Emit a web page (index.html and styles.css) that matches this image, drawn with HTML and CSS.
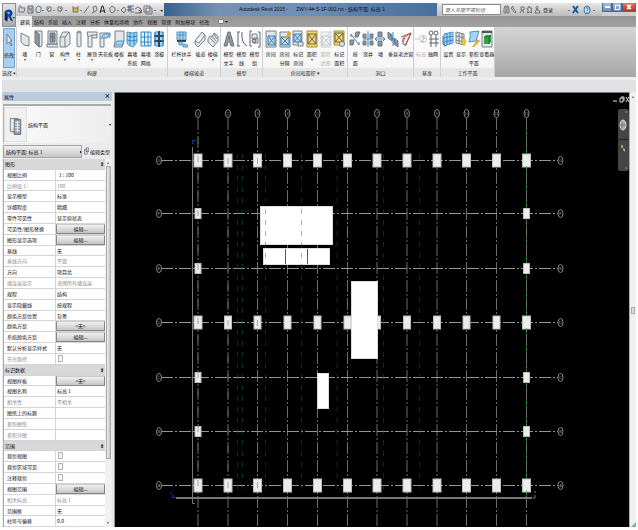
FILE: index.html
```html
<!DOCTYPE html>
<html lang="zh-CN">
<head>
<meta charset="utf-8">
<title>Autodesk Revit 2015 - ZWY-4#-S-1F-002.rvt</title>
<link rel="stylesheet" href="styles.css">
</head>
<body>
<div class="app">
  <header class="top">
    <button class="app-button" aria-label="R"><svg viewBox="0 0 14 23"><path d="M2 7Q8 3 11 8Q12 11 9 13L12 19L9 18L6 13L5 19L2 17L4 9Z" fill="#0b3f9c"/><path d="M5 8Q8 7 8 9Q8 11 6 11Z" fill="#7ab0ee"/><path d="M2 7L4 9L5 19L2 17Z" fill="#062560"/><path d="M11 14h3l-1.500 2z" fill="#333"/></svg></button>
    <div class="top-rows">
      <div class="titlebar">
        <div class="quick">
          <svg viewBox="0 0 148 13" class="line">
            <path d="M3 4v5h5l1-4H5V3H3M12 3h5v7h-5zM13 3v3h3V3M13 7h3v3M20 5l2-2 3 1v4l-2 2-3-1zM31 7V4h4v4h-3M31 7l2-2M31 7l2 2M46 7V4h-4v4h3M46 7l-2-2M46 7l-2 2M68 10l5-7M77 4l3-1 1 4-3 2zM78 9l-2 1"/>
            <path d="M57 5h5v4h-5z" fill="#e8b13c"/><path d="M57 3v2M62 3v2M119 6l3-2 3 2v4h-6M105 7l3-3 2 3-2 3z"/>
            <path d="M84 10l2-7h1l2 7M85 8h3" class="strong"/>
            <path d="M94 5l2-2 3 2v3l-3 2-2-2zM115 3h3M115 6h3M115 9h3M128 3h6v6h-6zM130 5h6v6h-6z"/>
            <path d="M112 3h3v2h-3zM112 6h3v2h-3z" fill="#3f8fd0"/><path d="M123 7l3 3M126 7l-3 3" stroke="#d02020"/>
            <path d="M26 7h2l-1 1zM37 7h2l-1 1zM49 7h2l-1 1zM64 7h2l-1 1zM101 7h2l-1 1zM138 7h2l-1 1zM144 7h3l-1 2z" class="arrow"/>
          </svg>
        </div>
        <h1 class="title"><span>Autodesk Revit 2015 -</span><span>ZWY-4#-S-1F-002.rvt - 结构平面: 标高 1</span></h1>
        <div class="help">
          <input class="search" type="text" placeholder="键入关键字或短语" aria-label="搜索">
          <svg viewBox="0 0 42 13" class="line help-icons"><path d="M3 10V6l1-3h1v7zM6 10V3h1l1 3v4zM12 3l-2 2 4 5 1-1-3-4zM20 4h3v3h-3zM19 10l2-3 2 3M28 3l1 2h2l-1 2 .5 3-2-1-2 1 .5-3-1-2h2zM36 7q-2-3 0-4 2 1 0 4M34 10l1-3h3l1 3z"/></svg>
          <button class="login">登录</button>
          <svg viewBox="0 0 42 13" class="line help-icons push"><path d="M8 7h2l-1 1zM33 7h2l-1 1z" class="arrow"/><path d="M13 3l5 7M18 3l-5 7" stroke="#145aa0" stroke-width="2"/><ellipse cx="27" cy="7" rx="3" ry="4" fill="#c9e2f5" stroke="#2872b0"/><path d="M26 5q2-1 2 1l-1 2M27 9v1"/></svg>
        </div>
        <div class="win"><button aria-label="最小化"><i class="min"></i></button><button aria-label="还原"><i class="res"></i></button><button aria-label="关闭" class="close"><svg viewBox="0 0 10 9"><path d="M3 2l4 5M7 2L3 7" stroke="#fff" stroke-width="2"/></svg></button></div>
      </div>
      <nav class="tabs"><a href="#" class="on">建筑</a><a href="#">结构</a><a href="#">系统</a><a href="#">插入</a><a href="#">注释</a><a href="#">分析</a><a href="#">体量和场地</a><a href="#">协作</a><a href="#">视图</a><a href="#">管理</a><a href="#">附加模块</a><a href="#">修改</a><svg viewBox="0 0 10 7"><rect x=".5" y="1.500" width="5" height="4" rx="1" fill="#eee" stroke="#777"/><path d="M7 3h3L8.500 5z" fill="#222"/></svg></nav>
    </div>
  </header>

  <div class="ribbon">
    <section class="panel p-select"><div class="tools">
      <button class="picked"><svg viewBox="0 0 12 18"><path d="M4 3v10l2-2 2 4 1-1-2-4h2z" class="g"/></svg>修改</button>
    </div><h2>选择 ▾</h2></section>
    <section class="panel p-build"><div class="tools">
      <button class="more"><svg viewBox="0 0 12 18"><path d="M2 3l8 4v9q-6 0-8-4z" class="g"/></svg>墙</button>
      <button><svg viewBox="0 0 12 18"><path d="M3 1h7v15l-3 1V4z" class="g"/><path d="M3 1l4 3v13l-4-4z" class="d"/></svg>门</button>
      <button><svg viewBox="0 0 12 18"><path d="M2 1h9v13H2zM1 14h11v3H1z" class="g"/><path d="M4 3h5v9H4zM6.500 3v9M4 7h5" class="d"/></svg>窗</button>
      <button class="more"><svg viewBox="0 0 12 18"><path d="M1 7l3-5h6l1 3v9l-4 3H1zM1 7h5v10M6 7l4-5" class="g"/></svg>构件</button>
      <button class="more"><svg viewBox="0 0 12 18"><path d="M4 2q2-2 4 0v14q-2 2-4 0z" class="g"/><path d="M4 2q2 2 4 0" class="g"/></svg>柱</button>
      <button class="more"><svg viewBox="0 0 12 18"><path d="M1 2h10v6H6v9H2V7z" class="g"/><path d="M2 7l4-2h5M6 8L6 5" class="g"/></svg>屋顶</button>
      <button><svg viewBox="0 0 12 18"><path d="M1 3h10v4H5v10H1z" class="g"/><path d="M2 8l3-4h6l-3 4z" class="b"/></svg>天花板</button>
      <button class="more"><svg viewBox="0 0 12 18"><path d="M2 1h9v10l-2 6H1l1-5z" class="g"/><path d="M1 15l3-4h7l-2 4z" class="b"/></svg>楼板</button>
      <button><svg viewBox="0 0 12 18"><path d="M1 2q6 2 10 0v10l-4 5q-5-1-6-4z" class="b"/><path d="M4 3v12M8 3v12M1 6q5 2 10 0M1 10q5 2 10 0" class="k"/></svg>幕墙<br>系统</button>
      <button><svg viewBox="0 0 12 18"><path d="M1 2h10v14H1z" class="w"/><path d="M1 2h10v14H1zM4.500 2v14M8 2v14M1 7h10M1 12h10" class="k"/></svg>幕墙<br>网格</button>
      <button><svg viewBox="0 0 12 18"><path d="M2 2h8v14H2z" class="b"/><path d="M6 1v16M1 6h10M1 11h10" stroke="#345" stroke-width="2"/><path d="M2 2v14M10 2v14" class="k"/></svg>竖梃</button>
    </div><h2>构建</h2></section>
    <section class="panel p-stair"><div class="tools">
      <button class="wide more"><svg viewBox="0 0 12 18"><path d="M1 2h9v8H1zM4 2v8M7 2v8M1 5h9" class="b"/><path d="M1 10h9v2H1z" fill="#3a3f45"/><path d="M3 12h3v2h3v1h3v2H7v-2H3z" class="b"/></svg>栏杆扶手</button>
      <button><svg viewBox="0 0 12 18"><path d="M1 11l7-9 3 3v5l-7 7-3-3zM1 11l4 2 6-8" class="g"/></svg>坡道</button>
      <button class="more"><svg viewBox="0 0 12 18"><path d="M1 9l2-3 2 1 2-4 4 3v5l-5 6-5-5zM3 8l5 5M5 6l4 5M7 4l3 5" class="g"/></svg>楼梯</button>
    </div><h2>楼梯坡道</h2></section>
    <section class="panel p-model"><div class="tools">
      <button><svg viewBox="0 0 12 18"><path d="M1 16L5 2h2l4 14H8l-1-4H5l-1 4zM5.500 9h1L6 6z" class="d"/></svg>模型<br>文字</button>
      <button><svg viewBox="0 0 12 18"><path d="M1 2h3M2 2v14M1 16h3M6 2q-1 11 5 14" class="n"/></svg>模型<br>线</button>
      <button><svg viewBox="0 0 12 18"><path d="M3 1H1v15h2M9 2h2v15H9" class="n"/><path d="M3 4h5v5H3zM5 8h4v5H5z" class="g"/><circle cx="5" cy="11" r="2" class="n"/></svg>模型<br>组</button>
    </div><h2>模型</h2></section>
    <section class="panel p-room"><div class="tools">
      <button><svg viewBox="0 0 12 18"><path d="M1 1h10v16H1z" class="g"/><path d="M3 6h7v9H3zM3 6l7 9M10 6l-7 9" class="x"/></svg>房间</button>
      <button><svg viewBox="0 0 12 18"><path d="M1 2h10v15H1z" class="g"/><path d="M2 7h8v8H2zM2 7l8 8M10 7l-8 8" class="x"/><path d="M6 8l4-7 2 2-4 6z" fill="#e7a12c"/></svg>房间<br>分隔</button>
      <button><svg viewBox="0 0 12 18"><path d="M1 1h9v14H1z" class="g"/><path d="M2 4h7v8H2zM2 4l7 8M9 4l-7 8" class="x"/><path d="M6 12h5v4H6z" class="g"/></svg>标记<br>房间</button>
      <button class="more"><svg viewBox="0 0 12 18"><path d="M1 1h10v16H1z" class="y"/><path d="M2 4h8v10H2zM2 4l8 10M10 4L2 14" class="n"/></svg>面积</button>
      <button disabled><svg viewBox="0 0 12 18"><path d="M1 2h10v15H1z" class="g"/><path d="M2 6h8v9H2zM2 6l8 9M10 6l-8 9M7 6l4-5" class="n"/></svg>面积<br>边界</button>
      <button><svg viewBox="0 0 12 18"><path d="M1 1h10v14H1z" class="y"/><path d="M2 3h8v9H2zM2 3l8 9M10 3l-8 9" class="n"/><circle cx="9" cy="14" r="2.500" class="g"/></svg>标记<br>面积</button>
    </div><h2>房间和面积 ▾</h2></section>
    <section class="panel p-open"><div class="tools">
      <button><svg viewBox="0 0 12 18"><path d="M7 2h4l-2 5H6zM1 10h4l-1 5H1z" class="d"/><path d="M2 4l8 11M2 4v3M10 15V12" class="k"/></svg>按<br>面</button>
      <button><svg viewBox="0 0 12 18"><path d="M1 4h3v4H1zM8 4h3v4H8zM1 11h3v4H1zM8 11h3v4H8z" class="d"/><path d="M6 1v16M1 9h10" class="k"/></svg>竖井</button>
      <button><svg viewBox="0 0 12 18"><path d="M4 2h4v5H4zM4 11h4v5H4z" class="d"/><path d="M1 9h10M3 7L1 9l2 2M9 7l2 2-2 2" class="k"/></svg>墙</button>
      <button><svg viewBox="0 0 12 18"><path d="M1 2l4 3v6L1 8zM7 8l4 3v6l-4-3z" class="d"/><path d="M6 2v14M3 4l6 10" class="k"/></svg>垂直</button>
      <button><svg viewBox="0 0 12 18"><path d="M3 14V8l8-5-5 12z" class="g"/><path d="M1 7l10-4L5 16M5 8l-3 4" stroke="#cf4436"/></svg>老虎窗</button>
    </div><h2>洞口</h2></section>
    <section class="panel p-datum"><div class="tools">
      <button disabled><svg viewBox="0 0 12 18"><path d="M0 9h4M8 5v8" class="n"/><circle cx="8" cy="9" r="3.500" class="n"/><path d="M8 6v3h3zM8 9v3H5z" fill="#555"/></svg>标高</button>
      <button><svg viewBox="0 0 12 18"><path d="M4 5v12M9 5v12M2 9h10M2 13h10" class="n"/><circle cx="4" cy="3" r="2" class="n"/><circle cx="9" cy="3" r="2" class="n"/></svg>轴网</button>
    </div><h2>基准</h2></section>
    <section class="panel p-plane"><div class="tools">
      <button><svg viewBox="0 0 12 18"><path d="M2 4l9-2v11l-9 3z" class="b"/><path d="M2 8l9-2M2 12l9-2M5 3v12M8 3v11" class="k"/><path d="M1 6v8l3 2" class="n"/></svg>设置</button>
      <button><svg viewBox="0 0 12 18"><path d="M1 2l8 2v11l-8-2zM1 6l8 2M1 10l8 2M4 3v11M7 3v11" class="g"/><path d="M9 9q3 0 2 4l-1 3H8L7 12q0-3 2-3" fill="#f1c530"/></svg>显示</button>
      <button><svg viewBox="0 0 12 18"><path d="M2 2l9-1-3 10-7 1q2-6 1-10" class="b"/><path d="M4 17l6-8 2 2-6 6z" fill="#e7a12c"/></svg>参照<br>平面</button>
      <button><svg viewBox="0 0 12 18"><path d="M1 1h10v16H1z" class="g"/><path d="M1 1h10v2H1z" fill="#555"/><path d="M3 7l2-2h5v7l-2 2H3z" fill="#35a14b"/><path d="M3 7h5v7M8 7l2-2" stroke="#1b6b2c"/></svg>查看器</button>
    </div><h2>工作平面</h2></section>
  </div>
  <div class="options"></div>

  <main class="work">
    <aside class="props">
      <div class="props-title"><span>属性</span><button aria-label="关闭属性">×</button></div>
      <button class="type"><span class="thumb"><svg viewBox="0 0 22 37"><path d="M5 11h8v14H5z" class="g"/><path d="M9 12h7v16H9z" class="d"/><path d="M10 15h5M10 18h5M10 21h5M10 24h5M12.500 14v12M6 14h3M6 17h3M6 20h3" stroke="#f4f7fa"/></svg></span><span>结构平面</span><i class="caret"></i></button>
      <div class="type-row">
        <select aria-label="类型"><option>结构平面: 标高 1</option></select>
        <button class="edit-type"><svg viewBox="0 0 6 9"><path d="M.5 2.500h3v5h-3zM2.500.5h3v4h-3z" fill="#fff" stroke="#587080"/></svg>编辑类型</button>
      </div>
      <div class="sheet">
        <table>
          <tbody>
          <tr class="group"><th colspan="2">图形<b>⇕</b></th></tr>
          <tr><th>视图比例</th><td class="inset">1 : 100</td></tr>
          <tr class="off"><th>比例值 1:</th><td>100</td></tr>
          <tr><th>显示模型</th><td>标准</td></tr>
          <tr><th>详细程度</th><td>精细</td></tr>
          <tr><th>零件可见性</th><td>显示原状态</td></tr>
          <tr><th>可见性/图形替换</th><td><button>编辑...</button></td></tr>
          <tr><th>图形显示选项</th><td><button>编辑...</button></td></tr>
          <tr><th>基线</th><td>无</td></tr>
          <tr class="off"><th>基线方向</th><td>平面</td></tr>
          <tr><th>方向</th><td>项目北</td></tr>
          <tr class="off"><th>墙连接显示</th><td>清理所有墙连接</td></tr>
          <tr><th>规程</th><td>结构</td></tr>
          <tr><th>显示隐藏线</th><td>按规程</td></tr>
          <tr><th>颜色方案位置</th><td>背景</td></tr>
          <tr><th>颜色方案</th><td><button>&lt;无&gt;</button></td></tr>
          <tr><th>系统颜色方案</th><td><button>编辑...</button></td></tr>
          <tr><th>默认分析显示样式</th><td>无</td></tr>
          <tr class="off"><th><label for="sun">日光路径</label></th><td><input type="checkbox" id="sun"></td></tr>
          <tr class="group"><th colspan="2">标识数据<b>⇕</b></th></tr>
          <tr><th>视图样板</th><td><button>&lt;无&gt;</button></td></tr>
          <tr><th>视图名称</th><td>标高 1</td></tr>
          <tr class="off"><th>相关性</th><td>不相关</td></tr>
          <tr><th>图纸上的标题</th><td></td></tr>
          <tr class="off"><th>参照图纸</th><td></td></tr>
          <tr class="off"><th>参照详图</th><td></td></tr>
          <tr class="group"><th colspan="2">范围<b>⇕</b></th></tr>
          <tr><th><label for="crop">裁剪视图</label></th><td><input type="checkbox" id="crop"></td></tr>
          <tr><th><label for="region">裁剪区域可见</label></th><td><input type="checkbox" id="region"></td></tr>
          <tr><th><label for="anno">注释裁剪</label></th><td><input type="checkbox" id="anno"></td></tr>
          <tr><th>视图范围</th><td><button>编辑...</button></td></tr>
          <tr class="off"><th>相关标高</th><td>标高 1</td></tr>
          <tr><th>范围框</th><td>无</td></tr>
          <tr><th>柱符号偏移</th><td>0.0</td></tr>
          </tbody>
        </table>
        <div class="scroll"><i class="up"></i><span class="thumb-bar"></span><i class="down"></i></div>
      </div>
    </aside>
    <div class="splitter"><i></i></div>
    <div class="view">
      <svg class="plan" id="plan" viewBox="115 93 514 434" preserveAspectRatio="xMinYMin meet"></svg>
      <div class="view-tools">
        <div class="view-win"><svg viewBox="0 0 16 7"><path d="M0 5h4M7 2h3v4H7zM8 1h3v4M13 1l3 5M16 1l-3 5"/></svg></div>
        <div class="navbar"><svg viewBox="0 0 10 62"><path d="M0 30.500h10" stroke="#222"/><ellipse cx="5" cy="16" rx="3" ry="5" fill="#aaa" stroke="#ddd"/><path d="M4 13v6M2 16h6" stroke="#777"/><path d="M6 22l2-2v2z" fill="#24489c"/><path d="M3 36h2v3H3z" fill="#a9a460"/><path d="M5 39l2 1v3l-2-2z" fill="#aaa"/><path d="M7 3h2M7 59h2" stroke="#999"/></svg></div>
      </div>
    </div>
    <div class="view-scroll"><i class="up"></i><i class="grip"></i><i class="corner"></i></div>
  </main>
</div>
<script src="plan.js"></script>
</body>
</html>
```
FILE: styles.css
```css
* { box-sizing: border-box; }
html, body { height: 100%; margin: 0; }
body {
  font: 5px/9px "Noto Sans CJK SC", "Liberation Sans", sans-serif;
  color: #111;
  background: #fff;
}
button, input, select {
  font: inherit; color: inherit; margin: 0; padding: 0;
  border: 0; background: none; border-radius: 0; min-width: 0;
}
svg { display: block; fill: none; }
i { display: block; }
a { color: inherit; text-decoration: none; }
h1, h2 { margin: 0; font-size: 5px; font-weight: 400; }
.app { height: 100%; padding: 3px 2px; display: flex; flex-direction: column; background: #fff; }

/* title bar and tabs */
.top { display: flex; flex: none; background: #9c9c9c; }
.app-button { width: 14px; height: 24px; background: linear-gradient(#e4e4e4, #aaa); border: 1px solid #909090; }
.app-button svg { width: 12px; height: 22px; }
.top-rows { flex: 1; min-width: 0; }
.titlebar { display: flex; height: 13px; background: #cfcfcf; }
.quick { width: 148px; flex: none; background: linear-gradient(#ececec, #c4c4c4); }
.line { height: 13px; stroke: #6a747e; stroke-width: 1; }
.line .strong { stroke: #222; stroke-width: 1; }
.line .arrow { fill: #333; stroke: none; }
.title {
  flex: 1; display: flex; gap: 8px; padding-left: 75px; white-space: nowrap; overflow: hidden;
  font: 5px/13px "Liberation Sans", "Noto Sans CJK SC", sans-serif; color: #06101e;
  background: linear-gradient(90deg, #38618e, #7592b5 20%, #6f8fb5 55%, #5c80ac 70%, #486f9f);
}
.help { width: 165px; flex: none; display: flex; align-items: center; background: linear-gradient(#e6e6e6, #bcbcbc); padding-left: 5px; }
.search { width: 59px; height: 11px; padding: 0 2px; background: #fff; border: 1px solid #8b8b8b; }
.search::placeholder { color: #666; font-style: italic; opacity: 1; }
.help-icons { width: 42px; flex: none; }
.login { width: 10px; white-space: nowrap; }
.push { margin-left: auto; }
.win { display: flex; width: 34px; flex: none; height: 9px; background: #53779f; align-self: flex-start; }
.win button { flex: 1; display: grid; place-items: center; background: linear-gradient(#a9bdd3, #6e8cb0); border: 1px solid #4c6a8c; border-top: 0; }
.win .close { flex: 0 0 14px; background: linear-gradient(#dc8068, #b9321c); }
.win .close svg { width: 10px; height: 8px; }
.min { width: 5px; height: 2px; background: #fff; }
.res { width: 5px; height: 5px; border: 1px solid #fff; }
.tabs { height: 11px; display: flex; align-items: stretch; line-height: 11px; background: linear-gradient(#949494, #a2a2a2); white-space: nowrap; }
.tabs a { padding: 0 2px; }
.tabs .on { background: #ececec; padding: 0 2px 0 4px; }
.tabs svg { width: 10px; height: 9px; margin: 1px 0 0 7px; }

/* ribbon */
.ribbon { display: flex; flex: none; height: 50px; background: linear-gradient(#d6d6d6, #a6a6a6); }
.panel { display: flex; flex-direction: column; background: linear-gradient(#fff, #f3f3f3); border-right: 1px solid #cfcfcf; }
.p-select { width: 15px; }
.p-build { width: 151px; }
.p-stair { width: 53px; }
.p-model { width: 42px; }
.p-room { width: 85px; }
.p-open { width: 66px; }
.p-datum { width: 27px; }
.p-plane { width: 54px; }
.tools { flex: 1; display: flex; padding: 1px 1px 0; }
.tools button {
  flex: 1 1 0; display: flex; flex-direction: column; align-items: center;
  padding-top: 2px; line-height: 9px; white-space: nowrap; text-align: center;
}
.tools .wide { flex-grow: 2; }
.tools svg { width: 12px; height: 18px; margin-bottom: 1px; flex: none; stroke-width: 1; }
.tools .picked { background: #a9cff0; border: 1px solid #6fa4d0; }
.tools .more::after { content: ""; border: 1px solid transparent; border-top: 2px solid #444; border-bottom: 0; margin-top: 1px; }
.tools button:disabled { opacity: .35; }
.panel h2 { height: 9px; line-height: 9px; text-align: center; white-space: nowrap; background: #e6e6e6; color: #333; }
.g { fill: #e4e7ea; stroke: #76808a; }
.d { fill: #8e98a3; stroke: #6a747f; }
.b { fill: #a8d4f3; stroke: #4c93c8; }
.w { fill: #e8f4fc; }
.k { stroke: #2f86c8; }
.n { stroke: #5c646c; }
.x { fill: #b9dcf2; stroke: #3f7ba6; }
.y { fill: #f8d763; stroke: #a98c2c; }
.options { flex: none; height: 15px; background: #dfe1e3; border-top: 3px solid #ededed; }

/* work area */
.work { flex: 1; min-height: 0; display: flex; }
.props { width: 110px; flex: none; display: flex; flex-direction: column; background: #ebebeb; }
.props-title { flex: none; height: 9px; display: flex; justify-content: space-between; padding: 0 2px; background: #b9cbdc; }
.props-title button { font: 9px/9px "Liberation Sans", sans-serif; }
.type {
  flex: none; height: 39px; margin: 3px 1px 2px; display: flex; align-items: center; gap: 1px; text-align: left;
  background: linear-gradient(90deg, #fafafa, #ededed); border-top: 2px solid #a8aca8; border-left: 1px solid #b8b8b8;
}
.thumb { height: 35px; width: 23px; background: #f1f1f1; border: 1px solid #ddd; }
.thumb svg { width: 22px; height: 35px; }
.caret { margin-left: auto; border: 1px solid transparent; border-top: 2px solid #222; border-bottom: 0; }
.type-row { flex: none; display: flex; gap: 2px; height: 14px; padding: 0 2px 1px 1px; align-items: center; }
.type-row select {
  width: 81px; height: 13px; line-height: 11px; padding: 0 2px; border: 1px solid #a5a5a5; appearance: none;
  background: linear-gradient(#222, #222) 76px 5px / 2px 2px no-repeat, linear-gradient(#eee, #c6c6c6);
}
.edit-type { display: flex; align-items: center; gap: 1px; white-space: nowrap; }
.edit-type svg { width: 6px; height: 9px; }
.sheet { flex: 1; min-height: 0; display: flex; padding-left: 1px; }
table { flex: 1; display: flex; border-left: 1px solid #aaa; background: #fff; }
tbody { flex: 1; display: flex; flex-direction: column; }
tr { flex: 1 1 0; min-height: 0; display: grid; grid-template-columns: 51px 1fr; border-bottom: 1px solid #d4d4d4; }
th, td { display: block; min-width: 0; padding: 0 0 0 3px; text-align: left; font-weight: 400; line-height: 10px; white-space: nowrap; }
td { padding-left: 1px; border-left: 1px solid #d4d4d4; }
.inset { padding-left: 3px; }
.off { color: #8c8c8c; }
.group { background: #d8d8d8; }
.group th { grid-column: 1 / 3; display: flex; justify-content: space-between; padding: 0 1px 0 1px; }
td button { display: block; width: 100%; height: 10px; line-height: 8px; border: 1px solid #888; border-top-color: #ccc; background: linear-gradient(#f0f0f0, #c6c6c6); }
td:has(button) { padding: 0; }
td input { display: block; appearance: none; width: 5px; height: 7px; margin: 1px; border: 1px solid #b4b4b4; background: #f4f4f4; }
.scroll { width: 6px; margin-right: 1px; display: flex; flex-direction: column; background: #f0f0f0; align-items: center; padding: 3px 0; }
.thumb-bar { flex: 0 0 81%; width: 5px; margin-top: 2px; background: linear-gradient(90deg, #eee, #c6c6c6); border: 1px solid #aaa; }
.up, .down { width: 0; height: 0; border: 1px solid transparent; border-bottom: 2px solid #555; border-top: 0; }
.down { border-top: 2px solid #555; border-bottom: 0; margin-top: auto; }
.splitter { width: 3px; flex: none; background: #e4e4e4; border-right: 1px solid #999; }

/* drawing view */
.view { flex: 1; min-width: 0; background: #000; border-top: 1px solid #777; position: relative; overflow: hidden; }
.plan { width: 100%; height: 100%; stroke-width: 1; font: 4px "Liberation Sans", sans-serif; }
.grid-line { stroke: #6c6c6c; stroke-dasharray: 12 2 2 2; }
.grid-row { stroke: #959595; stroke-dasharray: 12 2 2 2; }
.ref-line { stroke: #007a10; stroke-dasharray: 5 6; opacity: .45; }
.green-line { stroke: #35a035; stroke-dasharray: 6 12; opacity: .6; }
.bubble { fill: #000; stroke: #8a8a8a; }
.tag { fill: #999; text-anchor: middle; }
.column { fill: #ececec; stroke: #bdbdbd; }
.slab { fill: #fff; stroke: #ddd; }
.joint { stroke: #555; }
.mark { stroke: #777; }
.blue { stroke: #1238a0; }
.view-tools { position: absolute; top: 3px; right: 0; display: flex; flex-direction: column; align-items: flex-end; gap: 6px; }
.view-win svg { width: 16px; height: 7px; stroke: #ddd; }
.navbar { width: 11px; background: #454545; border-radius: 2px; }
.navbar svg { width: 10px; height: 62px; }
.view-scroll { width: 7px; flex: none; background: #f0f0f0; border-left: 1px solid #aaa; display: flex; flex-direction: column; justify-content: space-between; align-items: center; padding-top: 4px; }
.grip { width: 4px; height: 7px; border: 1px solid #aaa; background: #ddd; }
.corner { border-left: 5px solid transparent; border-bottom: 5px solid #63c374; }
```
FILE: plan.js
```js
const plan = document.getElementById('plan');
const NS = 'http://www.w3.org/2000/svg';

function add(tag, cls, attrs, text) {
  const node = document.createElementNS(NS, tag);
  node.setAttribute('class', cls);
  for (const key in attrs) node.setAttribute(key, attrs[key]);
  if (text) node.textContent = text;
  plan.appendChild(node);
}
const path = (cls, d) => add('path', cls, { d });
function bubble(x, y, name) {
  add('ellipse', 'bubble', { cx: x, cy: y, rx: 2.5, ry: 4 });
  add('text', 'tag', { x: x, y: y + 1.5 }, name);
}
function column(x, y, w, h) {
  add('rect', 'column', { x: x - w / 2, y: y - h / 2, width: w, height: h });
}

// Structural grid: numbered axes run down, lettered axes run across.
const axesX = [198, 228, 257.5, 287.5, 317.5, 347.5, 377, 407, 437, 466.5, 496.5, 526.5];
const axesY = [160.5, 213.5, 268.5, 322.5, 377.5, 431.5, 485.5];

axesX.forEach((x, i) => { path('grid-line', `M${x} 118V528`); bubble(x, 113.5, String(i + 1)); });
axesY.forEach((y, i) => {
  path('grid-row', `M161 ${y}H558`);
  const name = 'GFEDCBA'[i];
  bubble(159, y, name);
  bubble(560.5, y, name);
});

// Columns: full rows at the top, middle and bottom, edge columns between.
axesX.forEach((x, i) => {
  column(x, 160.5, 8, 13);
  column(x, 322.5, i === 0 || i === 11 ? 8 : 7, 13);
  column(x, 485.5, 8, 13);
});
[213.5, 268.5, 377.5, 431.5].forEach(y => { column(198, y, 6, 10); column(526.5, y, 6, 10); });

// Floor openings and slabs.
[[260.5, 206.5, 72, 38], [263.5, 248.5, 66, 16],
 [351.5, 281.5, 26, 77], [317.5, 373.5, 11, 35]].forEach(([x, y, width, height]) =>
  add('rect', 'slab', { x, y, width, height }));
path('joint', 'M285.5 249V264M307.500 249V264');

// Reference lines.
[237.5, 242.5, 265.5, 301.5, 337, 383.5, 419.5].forEach(x => path('ref-line', `M${x} 154V492`));
[[198, 138, 496], [228, 158, 496], [257.5, 158, 496], [526.5, 130, 496]].forEach(([x, a, b]) =>
  path('green-line', `M${x} ${a}V${b}`));

// View crop marks.
path('mark', 'M192.5 147V503.500H195M176 497.500H532M176 498.500H532M535 491v2M535 495v3h-2');
path('blue', 'M192.5 144V140.500H196M171 492v2M172.500 495V497.500H176');
```
